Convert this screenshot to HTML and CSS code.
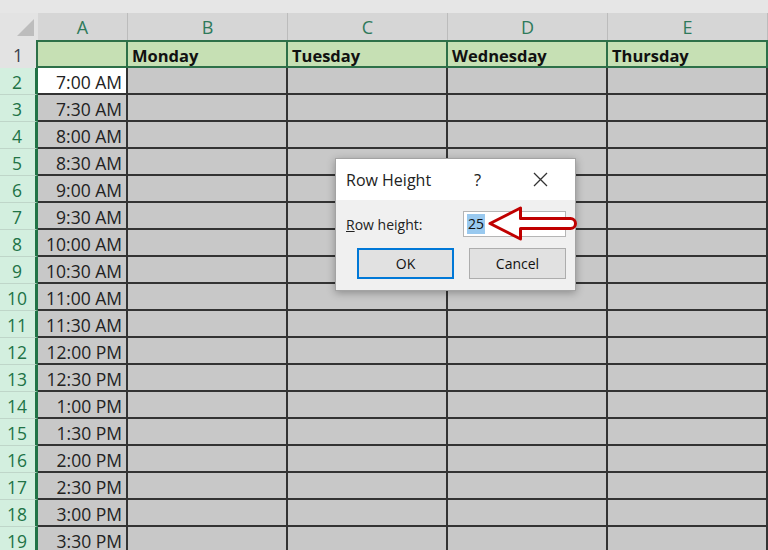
FILE: index.html
```html
<!DOCTYPE html>
<html>
<head>
<meta charset="utf-8">
<title>Row Height</title>
<link rel="stylesheet" href="styles.css">
</head>
<body>
<div class="topband"></div>
<div class="sheet">
  <div class="corner"><svg width="17" height="17" viewBox="0 0 17 17"><polygon points="0,17 17,0 17,17" fill="#bdbdbd"/></svg></div>
  <div class="colhdr">A</div>
  <div class="colhdr">B</div>
  <div class="colhdr">C</div>
  <div class="colhdr">D</div>
  <div class="colhdr">E</div>

  <div class="rh1">1</div>
  <div class="h"></div>
  <div class="h">Monday</div>
  <div class="h">Tuesday</div>
  <div class="h">Wednesday</div>
  <div class="h">Thursday</div>

  <div class="rh">2</div><div class="c t active">7:00 AM</div><div class="c"></div><div class="c"></div><div class="c"></div><div class="c"></div>
  <div class="rh">3</div><div class="c t">7:30 AM</div><div class="c"></div><div class="c"></div><div class="c"></div><div class="c"></div>
  <div class="rh">4</div><div class="c t">8:00 AM</div><div class="c"></div><div class="c"></div><div class="c"></div><div class="c"></div>
  <div class="rh">5</div><div class="c t">8:30 AM</div><div class="c"></div><div class="c"></div><div class="c"></div><div class="c"></div>
  <div class="rh">6</div><div class="c t">9:00 AM</div><div class="c"></div><div class="c"></div><div class="c"></div><div class="c"></div>
  <div class="rh">7</div><div class="c t">9:30 AM</div><div class="c"></div><div class="c"></div><div class="c"></div><div class="c"></div>
  <div class="rh">8</div><div class="c t">10:00 AM</div><div class="c"></div><div class="c"></div><div class="c"></div><div class="c"></div>
  <div class="rh">9</div><div class="c t">10:30 AM</div><div class="c"></div><div class="c"></div><div class="c"></div><div class="c"></div>
  <div class="rh">10</div><div class="c t">11:00 AM</div><div class="c"></div><div class="c"></div><div class="c"></div><div class="c"></div>
  <div class="rh">11</div><div class="c t">11:30 AM</div><div class="c"></div><div class="c"></div><div class="c"></div><div class="c"></div>
  <div class="rh">12</div><div class="c t">12:00 PM</div><div class="c"></div><div class="c"></div><div class="c"></div><div class="c"></div>
  <div class="rh">13</div><div class="c t">12:30 PM</div><div class="c"></div><div class="c"></div><div class="c"></div><div class="c"></div>
  <div class="rh">14</div><div class="c t">1:00 PM</div><div class="c"></div><div class="c"></div><div class="c"></div><div class="c"></div>
  <div class="rh">15</div><div class="c t">1:30 PM</div><div class="c"></div><div class="c"></div><div class="c"></div><div class="c"></div>
  <div class="rh">16</div><div class="c t">2:00 PM</div><div class="c"></div><div class="c"></div><div class="c"></div><div class="c"></div>
  <div class="rh">17</div><div class="c t">2:30 PM</div><div class="c"></div><div class="c"></div><div class="c"></div><div class="c"></div>
  <div class="rh">18</div><div class="c t">3:00 PM</div><div class="c"></div><div class="c"></div><div class="c"></div><div class="c"></div>
  <div class="rh">19</div><div class="c t">3:30 PM</div><div class="c"></div><div class="c"></div><div class="c"></div><div class="c"></div>
</div>

<div class="dialog">
  <div class="dtitle">
    <span class="dname">Row Height</span>
    <span class="help">?</span>
    <svg class="close" width="15" height="15" viewBox="0 0 15 15"><path d="M1 1 L14 14 M14 1 L1 14" stroke="#333" stroke-width="1.3" fill="none"/></svg>
  </div>
  <div class="dbody">
    <div class="frow">
      <span class="lbl"><u>R</u>ow height:</span>
      <div class="inp"><span class="sel">25</span></div>
    </div>
    <div class="brow">
      <div class="btn ok">OK</div>
      <div class="btn">Cancel</div>
    </div>
  </div>
</div>

<svg class="arrow" width="768" height="550" viewBox="0 0 768 550">
  <path d="M490 223.5 L520.5 208 L520.5 218.5 L570.5 218.5 A5 5 0 0 1 570.5 228.5 L520.5 228.5 L520.5 239 Z" fill="#ffffff" stroke="#c00000" stroke-width="3" stroke-linejoin="round"/>
</svg>
</body>
</html>
```

FILE: styles.css
```css
* { box-sizing: border-box; }

body {
  margin: 0;
  width: 768px;
  height: 550px;
  overflow: hidden;
  position: relative;
  background: #e6e6e6;
  font-family: "Open Sans", "Liberation Sans", sans-serif;
}

.topband {
  height: 13px;
  background: #e6e6e6;
}

.sheet {
  display: grid;
  grid-template-columns: 38px 90px 160px 160px 160px 160px;
  grid-template-rows: 27px 28px repeat(18, 27px);
}

.sheet > div {
  display: flex;
  align-items: center;
  overflow: hidden;
  white-space: nowrap;
}

.corner {
  background: #e3e3e3;
  justify-content: flex-end;
  align-items: flex-end !important;
  padding: 0 4px 4px 0;
}

.colhdr {
  background: #d6d6d6;
  border-right: 1px solid #bcbcbc;
  justify-content: center;
  color: #2f7a5b;
  font-size: 18px;
  padding-top: 1px;
}

.rh1 {
  background: #e3e3e3;
  color: #3a3f4a;
  justify-content: center;
  font-size: 17.5px;
  padding-top: 2px;
  border-right: 2px solid #2d7048;
}

.rh {
  background: #d3efdf;
  color: #217346;
  justify-content: center;
  font-size: 17.5px;
  padding-top: 2px;
  border-bottom: 1px solid #bfd6c9;
  border-right: 3px solid #217346;
  padding-right: 1px;
}

.h {
  background: #c6e0b4;
  border-top: 2px solid #2d7048;
  border-bottom: 2px solid #2d7048;
  border-right: 2px solid #2d7048;
  font-weight: 700;
  font-size: 16.5px;
  color: #111;
  padding-left: 4px;
  padding-top: 2px;
}

.c {
  background: #c8c8c8;
  border-right: 2px solid #333;
  border-bottom: 2px solid #333;
}

.t {
  justify-content: flex-end;
  padding-right: 4px;
  padding-top: 3px;
  font-size: 17.5px;
  color: #222;
}

.active {
  background: #fff;
}

.dialog {
  position: absolute;
  left: 335px;
  top: 158px;
  width: 241px;
  height: 133px;
  border: 1px solid #a3a3a3;
  box-shadow: 0 2px 8px rgba(0, 0, 0, 0.3);
  background: #f0f0f0;
  display: flex;
  flex-direction: column;
}

.dtitle {
  height: 41px;
  background: #fff;
  display: flex;
  align-items: center;
  padding: 0 27px 0 10px;
  font-size: 16px;
  color: #222;
}

.dname {
  flex: 1;
}

.help {
  margin-right: 52px;
  font-size: 16.5px;
}

.close {
  display: block;
}

.dbody {
  padding: 11px 9px 0 10px;
}

.frow {
  display: flex;
  align-items: center;
  justify-content: space-between;
  height: 26px;
}

.lbl {
  font-size: 14px;
  color: #222;
}

.inp {
  width: 103px;
  height: 26px;
  border: 1px solid #b5b5b5;
  background: #fff;
  display: flex;
  align-items: center;
  padding-left: 3px;
  font-size: 14px;
  color: #111;
}

.sel {
  background: #99c9ef;
  line-height: 20px;
  padding: 0 1px;
}

.brow {
  margin-top: 11px;
  display: flex;
  justify-content: flex-end;
  gap: 15px;
}

.btn {
  width: 97px;
  height: 31px;
  background: #e1e1e1;
  border: 1px solid #adadad;
  display: flex;
  align-items: center;
  justify-content: center;
  font-size: 14px;
  color: #111;
}

.ok {
  border: 2px solid #0078d7;
}

.arrow {
  position: absolute;
  left: 0;
  top: 0;
  pointer-events: none;
}
```
